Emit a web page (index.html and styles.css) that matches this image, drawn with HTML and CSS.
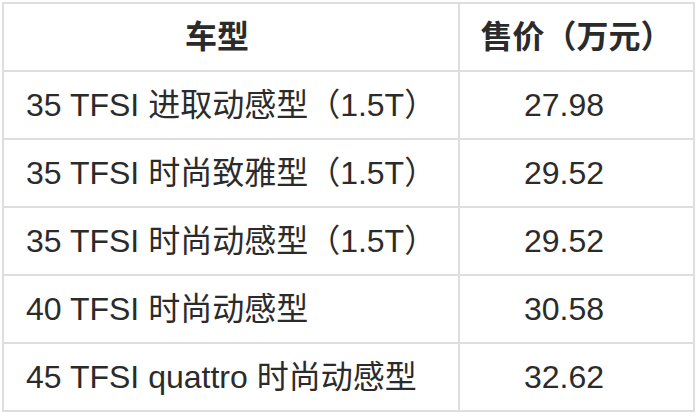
FILE: index.html
```html
<!DOCTYPE html>
<html lang="zh-CN">
<head>
<meta charset="utf-8">
<title>车型售价</title>
<link rel="stylesheet" href="styles.css">
</head>
<body>
<table class="price-table">
  <thead>
    <tr>
      <th class="col-model">车型</th>
      <th class="col-price">售价（万元）</th>
    </tr>
  </thead>
  <tbody>
    <tr><td class="model">35 TFSI 进取动感型（1.5T）</td><td class="price">27.98</td></tr>
    <tr><td class="model">35 TFSI 时尚致雅型（1.5T）</td><td class="price">29.52</td></tr>
    <tr><td class="model">35 TFSI 时尚动感型（1.5T）</td><td class="price">29.52</td></tr>
    <tr><td class="model">40 TFSI 时尚动感型</td><td class="price">30.58</td></tr>
    <tr><td class="model">45 TFSI quattro 时尚动感型</td><td class="price">32.62</td></tr>
  </tbody>
</table>
</body>
</html>
```
FILE: styles.css
```css
html, body {
  margin: 0;
  padding: 0;
  background: #ffffff;
}

body {
  font-family: "Liberation Sans", Arial, "Noto Sans CJK SC", sans-serif;
  color: #2b2b2b;
}

.price-table {
  margin: 2px 0 0 2px;
  border-collapse: separate;
  border-spacing: 0;
  border-top: 2px solid #dedede;
  border-left: 2px solid #dedede;
  table-layout: fixed;
}

.price-table th,
.price-table td {
  height: 66px;
  padding: 0;
  border-right: 2px solid #dedede;
  border-bottom: 2px solid #dedede;
  font-size: 32px;
  line-height: 36px;
  vertical-align: middle;
  white-space: nowrap;
  box-sizing: content-box;
}

.price-table th {
  font-weight: bold;
  text-align: center;
}

.col-model {
  width: 426px;
  padding-right: 28px !important;
}

.col-price {
  width: 233px;
}

.model {
  text-align: left;
  padding-left: 22px !important;
}

.price {
  text-align: center;
  padding-right: 25px !important;
}
```
